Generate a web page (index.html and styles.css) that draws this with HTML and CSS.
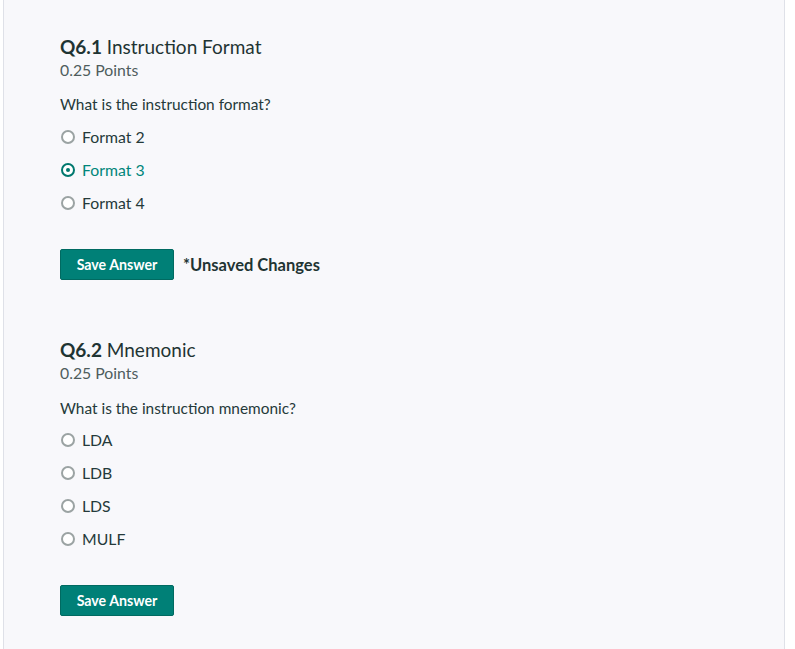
FILE: index.html
```html
<!DOCTYPE html>
<html>
<head>
<meta charset="utf-8">
<link rel="stylesheet" href="styles.css">
</head>
<body>
<div class="panel">
  <section class="question">
    <h2 class="q-title"><b>Q6.1</b> Instruction Format</h2>
    <div class="points">0.25 Points</div>
    <p class="prompt">What is the instruction format?</p>
    <ul class="options">
      <li class="option"><span class="radio"></span>Format 2</li>
      <li class="option selected"><span class="radio"></span>Format 3</li>
      <li class="option"><span class="radio"></span>Format 4</li>
    </ul>
    <div class="actions">
      <button class="save">Save Answer</button>
      <span class="unsaved">*Unsaved Changes</span>
    </div>
  </section>
  <section class="question second">
    <h2 class="q-title"><b>Q6.2</b> Mnemonic</h2>
    <div class="points">0.25 Points</div>
    <p class="prompt">What is the instruction mnemonic?</p>
    <ul class="options">
      <li class="option"><span class="radio"></span>LDA</li>
      <li class="option"><span class="radio"></span>LDB</li>
      <li class="option"><span class="radio"></span>LDS</li>
      <li class="option"><span class="radio"></span>MULF</li>
    </ul>
    <div class="actions">
      <button class="save">Save Answer</button>
    </div>
  </section>
</div>
</body>
</html>
```
FILE: styles.css
```css
html, body {
  margin: 0;
  padding: 0;
  background: #ffffff;
  height: 100%;
  overflow: hidden;
}
body {
  font-family: "Lato", "Open Sans", sans-serif;
  color: #253a3a;
}
.panel {
  margin-left: 3px;
  width: 782px;
  height: 649px;
  background: #f8f8fb;
  border-left: 1px solid #dfe1e8;
  border-right: 1px solid #dfe1e8;
  padding: 35px 0 0 56px;
  box-sizing: border-box;
}
.question {
  display: flex;
  flex-direction: column;
  align-items: flex-start;
}
.second {
  margin-top: 58px;
}
.q-title {
  margin: 0;
  font-size: 19px;
  font-weight: 400;
  line-height: 24px;
  color: #1f3433;
}
.q-title b {
  font-weight: 700;
}
.points {
  font-size: 15.8px;
  line-height: 21px;
  color: #4f5d5d;
}
.prompt {
  margin: 14px 0 0;
  font-size: 15.4px;
  line-height: 20px;
}
.second .prompt {
  margin-top: 15px;
}
.options {
  list-style: none;
  margin: 13px 0 0;
  padding: 0;
  display: flex;
  flex-direction: column;
  gap: 13px;
}
.second .options {
  margin-top: 12px;
}
.option {
  display: flex;
  align-items: center;
  gap: 7px;
  font-size: 15.8px;
  line-height: 20px;
  margin-left: 1px;
}
.radio {
  width: 14px;
  height: 14px;
  box-sizing: border-box;
  border: 2px solid #9ba3a3;
  border-radius: 50%;
  background: #fff;
  position: relative;
  flex: none;
}
.selected {
  color: #00867a;
}
.selected .radio {
  border-color: #00786e;
}
.selected .radio::after {
  content: "";
  position: absolute;
  left: 3px;
  top: 3px;
  width: 4px;
  height: 4px;
  border-radius: 50%;
  background: #00786e;
}
.actions {
  margin-top: 36px;
  display: flex;
  align-items: center;
  gap: 9px;
}
.save {
  font-family: inherit;
  width: 114px;
  height: 31px;
  background: #008077;
  border: 1px solid #006a61;
  border-radius: 2px;
  color: #ffffff;
  font-size: 14.2px;
  font-weight: 700;
  padding: 0;
}
.unsaved {
  font-size: 16.5px;
  font-weight: 700;
  color: #1f3433;
}
```
